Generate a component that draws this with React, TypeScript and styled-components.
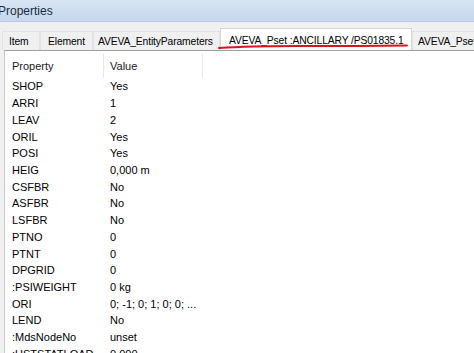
import styled, { createGlobalStyle } from "styled-components";

const GlobalStyle = createGlobalStyle`
    html, body {
        margin: 0;
        padding: 0;
        background: #ffffff;
        overflow: hidden;
    }
    body {
        font-family: "Liberation Sans", Arial, sans-serif;
        color: #000;
    }
`;

interface PropertyRow {
    name: string;
    value: string;
}

const rows: PropertyRow[] = [
    { name: "SHOP", value: "Yes" },
    { name: "ARRI", value: "1" },
    { name: "LEAV", value: "2" },
    { name: "ORIL", value: "Yes" },
    { name: "POSI", value: "Yes" },
    { name: "HEIG", value: "0,000 m" },
    { name: "CSFBR", value: "No" },
    { name: "ASFBR", value: "No" },
    { name: "LSFBR", value: "No" },
    { name: "PTNO", value: "0" },
    { name: "PTNT", value: "0" },
    { name: "DPGRID", value: "0" },
    { name: ":PSIWEIGHT", value: "0 kg" },
    { name: "ORI", value: "0; -1; 0; 1; 0; 0; ..." },
    { name: "LEND", value: "No" },
    { name: ":MdsNodeNo", value: "unset" },
    { name: ":USTSTATLOAD", value: "0,000" },
];

interface TabInfo {
    label: string;
    width: number;
    indent: number;
}

const tabs: TabInfo[] = [
    { label: "Item", width: 38, indent: 6 },
    { label: "Element", width: 53, indent: 7 },
    { label: "AVEVA_EntityParameters", width: 127, indent: 4 },
    { label: "AVEVA_Pset :ANCILLARY /PS01835.1", width: 192, indent: 8 },
    { label: "AVEVA_Pset :ANCILLARY", width: 130, indent: 5 },
];

const App = () => {
    const selected = 3;

    return (
        <Window>
            <GlobalStyle />
            <TitleBar>Properties</TitleBar>
            <TabStrip>
                {tabs.map((tab, i) => (
                    <Tab
                        key={tab.label}
                        $selected={i === selected}
                        $width={tab.width}
                        $indent={tab.indent}
                    >
                        {tab.label}
                    </Tab>
                ))}
                <Scribble width="474" height="53" viewBox="0 0 474 53">
                    <path
                        d="M219 48 Q 250 45.8 300 45.9 T 407 45.4"
                        fill="none"
                        stroke="#d9141b"
                        strokeWidth="2"
                        strokeLinecap="round"
                    />
                </Scribble>
            </TabStrip>
            <Panel>
                <HeaderRow>
                    <HeaderCell>Property</HeaderCell>
                    <HeaderCell>Value</HeaderCell>
                    <HeaderCell />
                </HeaderRow>
                {rows.map(row => (
                    <Row key={row.name}>
                        <NameCell>{row.name}</NameCell>
                        <ValueCell>{row.value}</ValueCell>
                    </Row>
                ))}
            </Panel>
        </Window>
    );
};

export default App;

const Window = styled.div`
    position: relative;
    width: 474px;
    height: 353px;
    display: flex;
    flex-direction: column;
    background: #f0f0f0;
    overflow: hidden;
`;

const TitleBar = styled.div`
    height: 21px;
    flex-shrink: 0;
    display: flex;
    align-items: center;
    margin-left: -2px;
    font-size: 12px;
    color: #1b2a40;
    background: linear-gradient(to bottom, #d9e5f4 0%, #cddcef 55%, #c6d7ee 100%);
    border-bottom: 1px solid #b9c9de;
`;

const TabStrip = styled.div`
    height: 28px;
    flex-shrink: 0;
    display: flex;
    align-items: flex-end;
    padding-left: 2px;
    background: #f0f0f0;
`;

const Tab = styled.div<{ $selected: boolean; $width: number; $indent: number }>`
    box-sizing: border-box;
    flex-shrink: 0;
    width: ${p => p.$width}px;
    height: ${p => (p.$selected ? "22px" : "19px")};
    display: flex;
    align-items: center;
    padding: ${p => (p.$selected ? "2px" : "1px")} 0 0 ${p => p.$indent}px;
    font-size: 10.3px;
    letter-spacing: -0.12px;
    white-space: nowrap;
    overflow: hidden;
    color: #000;
    background: ${p => (p.$selected ? "#ffffff" : "#f0f0f0")};
    border: 1px solid ${p => (p.$selected ? "#d6d6d6" : "#e2e2e2")};
    border-bottom: none;
    position: relative;
    z-index: ${p => (p.$selected ? 1 : 0)};
`;

const Scribble = styled.svg`
    position: absolute;
    left: 0;
    top: 0;
    pointer-events: none;
    z-index: 2;
`;

const Panel = styled.div`
    flex: 1;
    margin-left: 4px;
    padding-top: 3px;
    background: #ffffff;
    border-top: 1px solid #a0a0a0;
    border-left: 1px solid #c8c8c8;
`;

const HeaderRow = styled.div`
    display: grid;
    grid-template-columns: 99px 99px 1fr;
    height: 24px;
`;

const HeaderCell = styled.div`
    display: flex;
    align-items: center;
    padding-left: 6px;
    font-size: 11px;
    color: #1a1a1a;
    border-right: 1px solid #e8e8e8;

    &:first-child {
        padding-left: 7px;
    }
    &:last-child {
        border-right: none;
    }
`;

const Row = styled.div`
    display: grid;
    grid-template-columns: 99px 1fr;
    height: 16.73px;
    align-items: center;
    font-size: 11px;
`;

const NameCell = styled.div`
    padding-left: 7px;
    white-space: nowrap;
`;

const ValueCell = styled.div`
    padding-left: 6px;
    white-space: nowrap;
`;
